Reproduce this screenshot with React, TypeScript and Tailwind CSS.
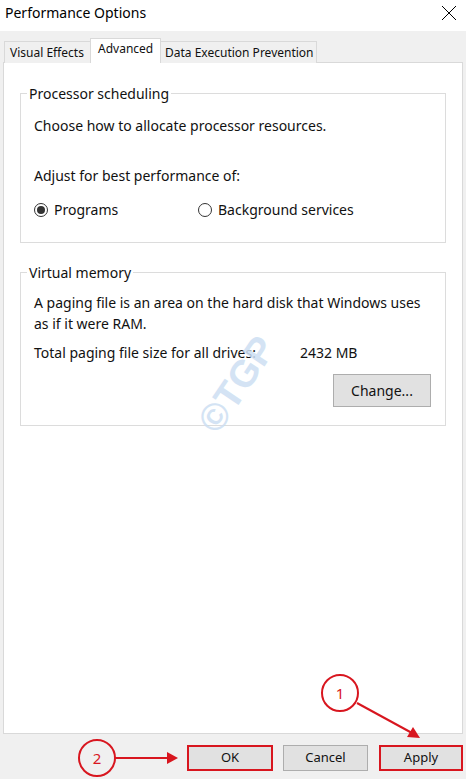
import React from "react";

const font = { fontFamily: '"Noto Sans", "Open Sans", sans-serif' };

function Radio({ checked, label }: { checked?: boolean; label: string }) {
  return (
    <div className="flex items-center gap-[6px]">
      <span className="w-[14px] h-[14px] rounded-full border border-[#333] bg-white flex items-center justify-center">
        {checked && <span className="w-[8px] h-[8px] rounded-full bg-[#333]" />}
      </span>
      <span>{label}</span>
    </div>
  );
}

function Btn({ label, red, w }: { label: string; red?: boolean; w: string }) {
  return (
    <div
      className={`${w} h-[26px] flex items-center justify-center text-[13px] bg-[#e1e1e1] ${
        red ? "border-2 border-[#d8161f]" : "border border-[#adadad]"
      }`}
    >
      {label}
    </div>
  );
}

export default function App() {
  return (
    <div
      className="relative w-[466px] h-[779px] bg-[#f0f0f0] flex flex-col text-[#111] overflow-hidden"
      style={font}
    >
      {/* Title bar */}
      <div className="h-[31px] shrink-0 bg-white flex items-center justify-between pl-[5px] pr-[8px] pb-[6px]">
        <span className="text-[14px] text-black">Performance Options</span>
        <svg width="16" height="16" viewBox="0 0 16 16" className="mr-[1px]">
          <path d="M1 1 L15 15 M15 1 L1 15" stroke="#000" strokeWidth="1" />
        </svg>
      </div>

      {/* Tabs */}
      <div className="flex items-end pl-[4px] h-[32px] shrink-0 -mb-[1px] relative z-10 text-[12px] whitespace-nowrap">
        <div className="h-[22px] pl-[5px] border border-[#d9d9d9] border-b-0 bg-[#f0f0f0] flex items-center w-[87px]">
          Visual Effects
        </div>
        <div className="h-[25px] -mx-[1px] pl-[7px] border border-[#d9d9d9] border-b-0 bg-white flex items-start pt-[1px] w-[71px] relative z-10">
          Advanced
        </div>
        <div className="h-[22px] pl-[4px] border border-[#d9d9d9] border-b-0 bg-[#f0f0f0] flex items-center w-[157px]">
          Data Execution Prevention
        </div>
      </div>

      {/* Panel */}
      <div className="mx-[3px] w-[460px] h-[672px] shrink-0 border border-[#d9d9d9] bg-white px-[16px] pt-[20px] text-[14px]">
        <fieldset className="border border-[#dcdcdc] px-[13px] h-[160px]">
          <legend className="ml-[-7px] px-[2px] text-[14px]">Processor scheduling</legend>
          <div className="mt-[11px]">Choose how to allocate processor resources.</div>
          <div className="mt-[29px]">Adjust for best performance of:</div>
          <div className="mt-[13px] flex">
            <div className="w-[164px]">
              <Radio checked label="Programs" />
            </div>
            <Radio label="Background services" />
          </div>
        </fieldset>

        <fieldset className="border border-[#dcdcdc] px-[13px] mt-[19px] h-[164px]">
          <legend className="ml-[-7px] px-[2px] text-[14px]">Virtual memory</legend>
          <div className="mt-[9px] leading-[21px]">
            A paging file is an area on the hard disk that Windows uses as if it were RAM.
          </div>
          <div className="mt-[8px] flex">
            <span className="w-[266px]">Total paging file size for all drives:</span>
            <span>2432 MB</span>
          </div>
          <div className="flex justify-end mt-[11px] pr-[1px]">
            <div className="w-[98px] h-[33px] bg-[#e1e1e1] border border-[#adadad] flex items-center justify-center">
              Change...
            </div>
          </div>
        </fieldset>
      </div>

      {/* Buttons */}
      <div className="flex-1 flex items-start justify-end pt-[11px] pr-[3px]">
        <Btn label="OK" red w="w-[86px]" />
        <div className="w-[10px]" />
        <Btn label="Cancel" w="w-[85px]" />
        <div className="w-[11px]" />
        <Btn label="Apply" red w="w-[84px]" />
      </div>

      {/* Watermark */}
      <div
        className="absolute left-[184px] top-[356px] text-[38px] font-bold text-[#cddff3] pointer-events-none"
        style={{ transform: "rotate(-56deg)", fontFamily: '"Liberation Sans", sans-serif', opacity: 0.85 }}
      >
        ©TGP
      </div>

      {/* Annotations */}
      <svg className="absolute left-0 top-0 pointer-events-none" width="466" height="779" viewBox="0 0 466 779">
        <circle cx="340" cy="693" r="18" fill="none" stroke="#d8161f" strokeWidth="2" />
        <text x="340" y="699" textAnchor="middle" fontSize="15" fill="#d8161f" fontFamily="Noto Sans, sans-serif">1</text>
        <line x1="357" y1="703" x2="412" y2="733" stroke="#d8161f" strokeWidth="2" />
        <polygon points="420,738 407,737 413,727" fill="#d8161f" />

        <circle cx="97" cy="758" r="18" fill="none" stroke="#d8161f" strokeWidth="2" />
        <text x="97" y="764" textAnchor="middle" fontSize="15" fill="#d8161f" fontFamily="Noto Sans, sans-serif">2</text>
        <line x1="115" y1="758" x2="170" y2="758" stroke="#d8161f" strokeWidth="2" />
        <polygon points="178,758 167,752 167,764" fill="#d8161f" />
      </svg>
    </div>
  );
}
